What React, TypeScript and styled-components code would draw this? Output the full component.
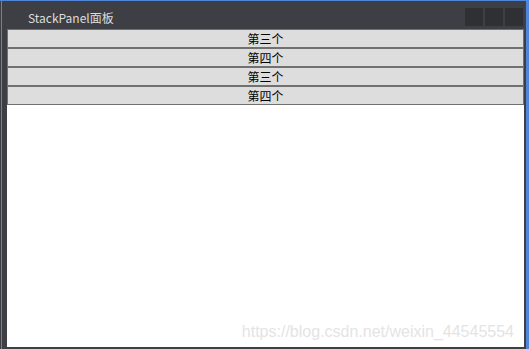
import styled, { createGlobalStyle } from "styled-components";

const GlobalStyle = createGlobalStyle`
  html, body {
    margin: 0;
    padding: 0;
    background: #ffffff;
  }
  * {
    box-sizing: border-box;
  }
`;

const Window = styled.div`
  width: 529px;
  height: 349px;
  display: flex;
  flex-direction: column;
  padding: 0 5px 2px 7px;
  background-color: #3e3f44;
  box-shadow:
    inset 0 1px 0 #4f86d9,
    inset 1px 0 0 #3e3f44,
    inset 2px 0 0 #4f86d9,
    inset -3px 0 0 #4f86d9;
  font-family: "Noto Sans CJK SC", "Noto Sans", sans-serif;
`;

const TitleBar = styled.div`
  height: 29px;
  display: flex;
  align-items: flex-start;
  flex-shrink: 0;
`;

const Title = styled.span`
  margin: 10px 0 0 21px;
  font-size: 12px;
  line-height: 15px;
  color: #dcdcdc;
`;

const Captions = styled.div`
  display: flex;
  gap: 2px;
  margin: 8px 1px 0 auto;
`;

const CaptionButton = styled.div`
  width: 18px;
  height: 18px;
  background-color: #2f3034;
`;

const Content = styled.div`
  flex: 1;
  position: relative;
  background-color: #ffffff;
  display: flex;
  flex-direction: column;
`;

const StackButton = styled.div`
  height: 19px;
  border: 1px solid #707070;
  background-color: #dddddd;
  display: flex;
  align-items: center;
  justify-content: center;
  font-size: 12px;
  color: #000000;
`;

const Watermark = styled.span`
  position: absolute;
  right: 10px;
  bottom: 6px;
  font-family: "Liberation Sans", Arial, sans-serif;
  font-size: 16px;
  color: #e4e4e4;
`;

const items = ["第三个", "第四个", "第三个", "第四个"];

export default function App() {
  return (
    <>
      <GlobalStyle />
      <Window>
        <TitleBar>
          <Title>StackPanel面板</Title>
          <Captions>
            <CaptionButton />
            <CaptionButton />
            <CaptionButton />
          </Captions>
        </TitleBar>
        <Content>
          {items.map((t, i) => (
            <StackButton key={i}>{t}</StackButton>
          ))}
          <Watermark>https://blog.csdn.net/weixin_44545554</Watermark>
        </Content>
      </Window>
    </>
  );
}
